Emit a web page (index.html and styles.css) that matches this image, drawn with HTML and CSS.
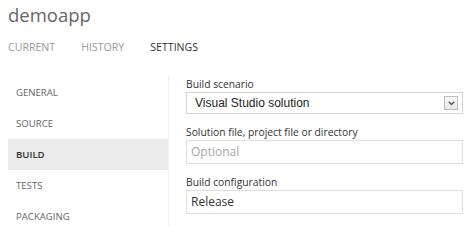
FILE: index.html
```html
<!DOCTYPE html>
<html lang="en">
<head>
  <meta charset="UTF-8">
  <title>demoapp - Settings</title>
  <link rel="stylesheet" href="styles.css">
</head>
<body>
  <div class="page">
    <h1 class="app-title">demoapp</h1>

    <!-- Top tabs -->
    <div class="tabs">
      <span class="tab">CURRENT</span>
      <span class="tab">HISTORY</span>
      <span class="tab active">SETTINGS</span>
    </div>

    <div class="settings">
      <!-- Sidebar -->
      <ul class="side-nav">
        <li>GENERAL</li>
        <li>SOURCE</li>
        <li class="selected">BUILD</li>
        <li>TESTS</li>
        <li>PACKAGING</li>
      </ul>

      <!-- Build form -->
      <div class="form">
        <div class="field">
          <label>Build scenario</label>
          <div class="select">
            <span>Visual Studio solution</span>
            <span class="select-arrow">
              <svg width="7" height="5" viewBox="0 0 7 5"><path d="M0.8 0.8 L3.5 3.6 L6.2 0.8" fill="none" stroke="#555" stroke-width="1.4"/></svg>
            </span>
          </div>
        </div>
        <div class="field">
          <label>Solution file, project file or directory</label>
          <div class="input placeholder">Optional</div>
        </div>
        <div class="field">
          <label>Build configuration</label>
          <div class="input">Release</div>
        </div>
      </div>
    </div>
  </div>
</body>
</html>
```

FILE: styles.css
```css
body {
  margin: 0;
  background-color: #ffffff;
  font-family: "Open Sans", Arial, sans-serif;
  color: #333333;
}
.page {
  padding: 0 0 0 8px;
}
.app-title {
  margin: 0;
  padding-top: 2px;
  font-size: 18.5px;
  font-weight: normal;
  line-height: 26px;
  color: #666666;
}
.tabs {
  display: flex;
  gap: 26px;
  margin-top: 11px;
  height: 16px;
  font-size: 10.6px;
  line-height: 16px;
}
.tab {
  color: #9a9a9a;
}
.tab.active {
  color: #333333;
}
.settings {
  display: flex;
  margin-top: 20px;
}
.side-nav {
  list-style: none;
  margin: 0;
  padding: 2px 0 0 0;
  width: 160px;
  border-right: 1px solid #efefef;
  height: 160px;
}
.side-nav li {
  height: 31px;
  line-height: 31px;
  padding-left: 8px;
  font-size: 9.6px;
  color: #666666;
}
.side-nav li.selected {
  background-color: #ebebeb;
  color: #333333;
  font-weight: 600;
}
.form {
  width: 277px;
  padding-left: 17px;
  padding-top: 1px;
}
.field {
  margin-bottom: 10px;
}
.field label {
  display: block;
  font-size: 10.3px;
  line-height: 16px;
  color: #333333;
}
.select {
  display: flex;
  align-items: center;
  justify-content: space-between;
  height: 20px;
  border: 1px solid #d4d4d4;
  padding: 0 4px 0 8px;
  font-family: "Liberation Sans", Arial, sans-serif;
  font-size: 12px;
  color: #222222;
}
.select-arrow {
  display: flex;
  align-items: center;
  justify-content: center;
  width: 12px;
  height: 12px;
  border: 1px solid #bdbdbd;
  background: linear-gradient(#fafafa, #e6e6e6);
}
.input {
  height: 22px;
  line-height: 22px;
  border: 1px solid #dedede;
  padding-left: 4px;
  font-size: 12px;
  color: #333333;
}
.input.placeholder {
  color: #a6a6a6;
}
```
